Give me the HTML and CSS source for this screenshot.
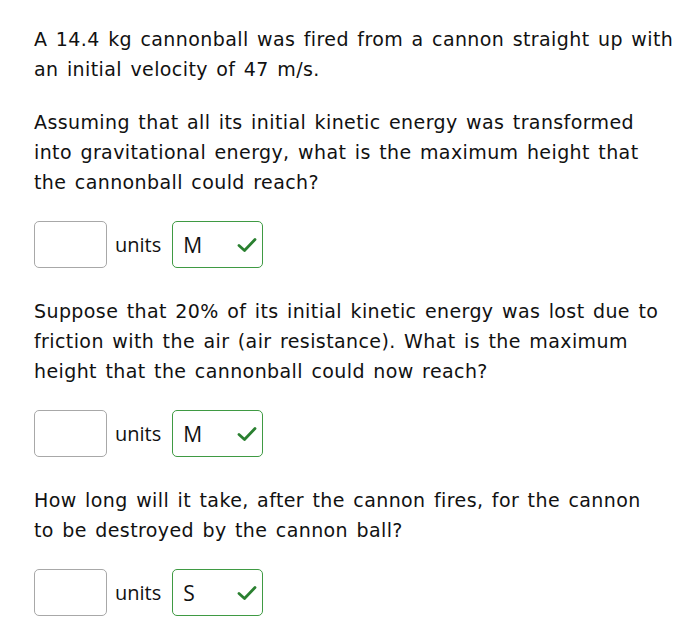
FILE: index.html
```html
<!DOCTYPE html>
<html>
<head>
<meta charset="utf-8">
<link rel="stylesheet" href="styles.css">
</head>
<body>
<div class="question">
  <p class="text">A 14.4 kg cannonball was fired from a cannon straight up with<br>an initial velocity of 47 m/s.</p>
  <p class="text">Assuming that all its initial kinetic energy was transformed<br>into gravitational energy, what is the maximum height that<br>the cannonball could reach?</p>
  <div class="answer-row">
    <span class="answer-box"></span>
    <span class="units">units</span>
    <span class="unit-select"><span class="unit-value">M</span><svg class="check" width="20" height="16" viewBox="0 0 20 16"><path d="M2 8.5 L7.5 13.5 L18 2.5" fill="none" stroke="#2a8030" stroke-width="2.8" stroke-linecap="round" stroke-linejoin="round"/></svg></span>
  </div>
  <p class="text">Suppose that 20% of its initial kinetic energy was lost due to<br>friction with the air (air resistance). What is the maximum<br>height that the cannonball could now reach?</p>
  <div class="answer-row">
    <span class="answer-box"></span>
    <span class="units">units</span>
    <span class="unit-select"><span class="unit-value">M</span><svg class="check" width="20" height="16" viewBox="0 0 20 16"><path d="M2 8.5 L7.5 13.5 L18 2.5" fill="none" stroke="#2a8030" stroke-width="2.8" stroke-linecap="round" stroke-linejoin="round"/></svg></span>
  </div>
  <p class="text">How long will it take, after the cannon fires, for the cannon<br>to be destroyed by the cannon ball?</p>
  <div class="answer-row">
    <span class="answer-box"></span>
    <span class="units">units</span>
    <span class="unit-select"><span class="unit-value">S</span><svg class="check" width="20" height="16" viewBox="0 0 20 16"><path d="M2 8.5 L7.5 13.5 L18 2.5" fill="none" stroke="#2a8030" stroke-width="2.8" stroke-linecap="round" stroke-linejoin="round"/></svg></span>
  </div>
</div>
</body>
</html>
```

FILE: styles.css
```css
html, body {
  margin: 0;
  padding: 0;
  background: #ffffff;
}

.question {
  padding: 24px 0 0 34px;
  color: #111111;
}

.text {
  margin: 0 0 23px 0;
  font-family: "DejaVu Sans", sans-serif;
  font-size: 19px;
  line-height: 30px;
  letter-spacing: 0.4px;
  word-spacing: 2px;
  white-space: nowrap;
}

.answer-row {
  display: flex;
  align-items: center;
  margin: 24px 0 28px 0;
  height: 47px;
}

.answer-box {
  box-sizing: border-box;
  width: 73px;
  height: 47px;
  border: 1.5px solid #a8a8a8;
  border-radius: 5px;
  background: #ffffff;
}

.units {
  margin: 0 11px 0 8px;
  font-family: "Open Sans", sans-serif;
  font-size: 20px;
  color: #111111;
}

.unit-select {
  box-sizing: border-box;
  width: 91px;
  height: 47px;
  border: 1.5px solid #3f9a43;
  border-radius: 5px;
  display: flex;
  align-items: center;
  justify-content: space-between;
  padding: 0 5px 0 10px;
}

.unit-value {
  font-family: "Open Sans", sans-serif;
  font-size: 21px;
  color: #111111;
}

.check {
  display: block;
}
```
